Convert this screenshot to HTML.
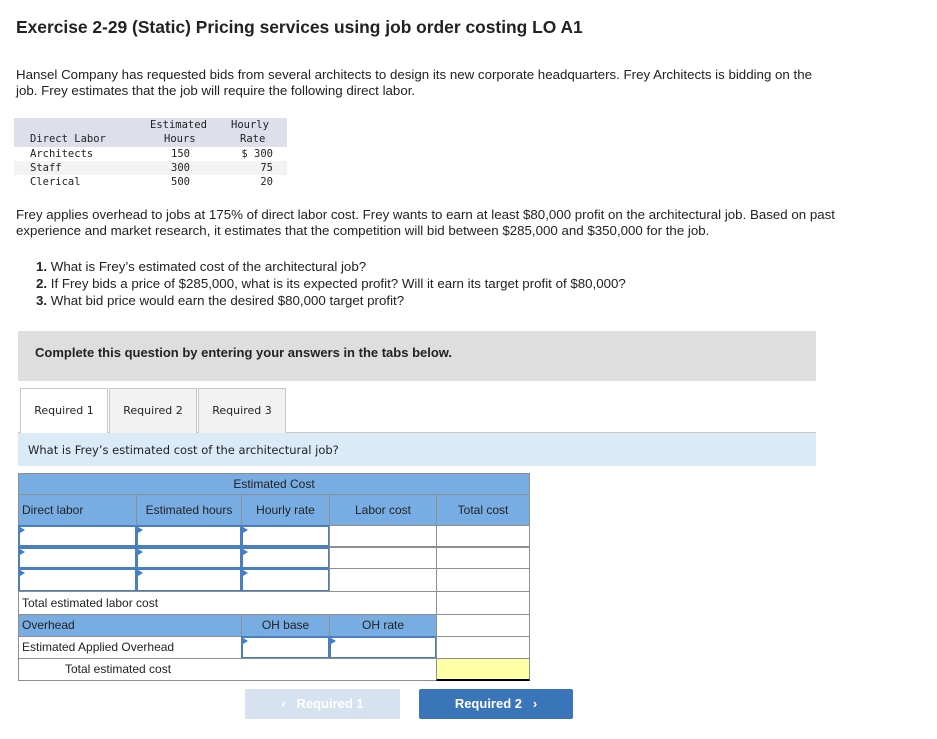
<!DOCTYPE html>
<html><head><meta charset="utf-8"><style>
body{margin:0;width:937px;height:739px;background:#fff;font-family:"Liberation Sans",sans-serif;color:#222;position:relative;overflow:hidden}
.a{position:absolute}
p{margin:0}
.mono{font-family:"DejaVu Sans Mono","Liberation Mono",monospace;font-size:10.5px;color:#222}
.tab{position:absolute;top:388px;height:44px;border:1px solid #c8c8c8;border-bottom:none;background:#f2f2f2;font-family:"DejaVu Sans",sans-serif;font-size:11px;line-height:44px;text-align:center;color:#222}
.c{position:absolute;box-sizing:border-box;border:1px solid #8e8e8e;font-size:12px;color:#222}
.h{background:#78ade3}
.in{border:2px solid #4a7fbf;background:#fff}
.in:before{content:"";position:absolute;left:0;top:0;border-left:5px solid #3b7fd0;border-top:3px solid transparent;border-bottom:3px solid transparent}
</style></head><body>
<div class="a" style="left:16px;top:17px;font-size:17.4px;font-weight:bold;color:#222">Exercise 2-29 (Static) Pricing services using job order costing LO A1</div>
<p class="a" style="left:16px;top:67px;width:812px;font-size:13.3px;line-height:16px">Hansel Company has requested bids from several architects to design its new corporate headquarters. Frey Architects is bidding on the job. Frey estimates that the job will require the following direct labor.</p>

<div class="a" style="left:14px;top:118px;width:273px;height:29px;background:#dde0ea"></div>
<div class="a" style="left:14px;top:161px;width:273px;height:14px;background:#f3f3f3"></div>
<div class="a mono" style="left:30px;top:133px">Direct Labor</div>
<div class="a mono" style="left:150px;top:119px">Estimated</div>
<div class="a mono" style="left:164px;top:133px">Hours</div>
<div class="a mono" style="left:231px;top:119px">Hourly</div>
<div class="a mono" style="left:240px;top:133px">Rate</div>
<div class="a mono" style="left:30px;top:147px;line-height:14px">Architects<br>Staff<br>Clerical</div>
<div class="a mono" style="left:171px;top:147px;line-height:14px">150<br>300<br>500</div>
<div class="a mono" style="left:234px;top:147px;width:39px;text-align:right;line-height:14px">$ 300<br>75<br>20</div>

<p class="a" style="left:16px;top:207px;width:880px;font-size:13.3px;line-height:16px">Frey applies overhead to jobs at 175% of direct labor cost. Frey wants to earn at least $80,000 profit on the architectural job. Based on past experience and market research, it estimates that the competition will bid between $285,000 and $350,000 for the job.</p>
<p class="a" style="left:36px;top:258px;font-size:13.3px;line-height:17px"><b>1.</b> What is Frey’s estimated cost of the architectural job?<br><b>2.</b> If Frey bids a price of $285,000, what is its expected profit? Will it earn its target profit of $80,000?<br><b>3.</b> What bid price would earn the desired $80,000 target profit?</p>

<div class="a" style="left:18px;top:331px;width:798px;height:50px;background:#dedede"></div>
<div class="a" style="left:35px;top:345px;font-size:13px;font-weight:bold">Complete this question by entering your answers in the tabs below.</div>

<div class="a" style="left:18px;top:432px;width:798px;height:1px;background:#c8c8c8"></div>
<div class="tab" style="left:20px;width:86px;background:#fff;height:45px">Required 1</div>
<div class="tab" style="left:109px;width:86px">Required 2</div>
<div class="tab" style="left:198px;width:86px">Required 3</div>
<div class="a" style="left:18px;top:433px;width:798px;height:33px;background:#daeaf7"></div>
<div class="a" style="left:28px;top:443px;font-family:'DejaVu Sans',sans-serif;font-size:11.5px">What is Frey’s estimated cost of the architectural job?</div>

<div class="c h" style="left:18px;top:473px;width:512px;height:22px;text-align:center;line-height:20px">Estimated Cost</div>
<div class="c h" style="left:18px;top:494px;width:119px;height:32px;line-height:30px;padding-left:3px">Direct labor</div>
<div class="c h" style="left:136px;top:494px;width:106px;height:32px;line-height:30px;text-align:center">Estimated hours</div>
<div class="c h" style="left:241px;top:494px;width:89px;height:32px;line-height:30px;text-align:center">Hourly rate</div>
<div class="c h" style="left:329px;top:494px;width:108px;height:32px;line-height:30px;text-align:center">Labor cost</div>
<div class="c h" style="left:436px;top:494px;width:94px;height:32px;line-height:30px;text-align:center">Total cost</div>

<div class="c in" style="left:18px;top:525px;width:119px;height:22px"></div>
<div class="c in" style="left:136px;top:525px;width:106px;height:22px"></div>
<div class="c in" style="left:241px;top:525px;width:89px;height:22px"></div>
<div class="c" style="left:329px;top:525px;width:108px;height:22px"></div>
<div class="c" style="left:436px;top:525px;width:94px;height:22px"></div>
<div class="c in" style="left:18px;top:547px;width:119px;height:22px"></div>
<div class="c in" style="left:136px;top:547px;width:106px;height:22px"></div>
<div class="c in" style="left:241px;top:547px;width:89px;height:22px"></div>
<div class="c" style="left:329px;top:547px;width:108px;height:22px"></div>
<div class="c" style="left:436px;top:547px;width:94px;height:22px"></div>
<div class="c in" style="left:18px;top:568px;width:119px;height:24px"></div>
<div class="c in" style="left:136px;top:568px;width:106px;height:24px"></div>
<div class="c in" style="left:241px;top:568px;width:89px;height:24px"></div>
<div class="c" style="left:329px;top:568px;width:108px;height:24px;border-bottom:1px solid #000"></div>
<div class="c" style="left:436px;top:568px;width:94px;height:24px"></div>

<div class="c" style="left:18px;top:591px;width:419px;height:24px;line-height:22px;padding-left:3px">Total estimated labor cost</div>
<div class="c" style="left:436px;top:591px;width:94px;height:24px"></div>
<div class="c h" style="left:18px;top:614px;width:224px;height:23px;line-height:21px;padding-left:3px">Overhead</div>
<div class="c h" style="left:241px;top:614px;width:89px;height:23px;line-height:21px;text-align:center">OH base</div>
<div class="c h" style="left:329px;top:614px;width:108px;height:23px;line-height:21px;text-align:center">OH rate</div>
<div class="c" style="left:436px;top:614px;width:94px;height:23px"></div>
<div class="c" style="left:18px;top:636px;width:224px;height:23px;line-height:21px;padding-left:3px">Estimated Applied Overhead</div>
<div class="c in" style="left:241px;top:636px;width:89px;height:23px"></div>
<div class="c in" style="left:329px;top:636px;width:108px;height:23px"></div>
<div class="c" style="left:436px;top:636px;width:94px;height:23px"></div>
<div class="c" style="left:18px;top:658px;width:419px;height:23px;line-height:21px;padding-left:46px">Total estimated cost</div>
<div class="c" style="left:436px;top:658px;width:94px;height:23px;background:#ffffa6;border-bottom:2px solid #000"></div>

<div class="a" style="left:245px;top:689px;width:155px;height:30px;background:#d6e2f0;border-radius:2px;color:#fff;font-weight:bold;font-size:13px;line-height:30px;text-align:center">‹&nbsp;&nbsp;&nbsp;Required 1</div>
<div class="a" style="left:419px;top:689px;width:154px;height:30px;background:#3a75b9;border-radius:2px;color:#fff;font-weight:bold;font-size:13px;line-height:30px;text-align:center">Required 2&nbsp;&nbsp;&nbsp;›</div>
</body></html>
